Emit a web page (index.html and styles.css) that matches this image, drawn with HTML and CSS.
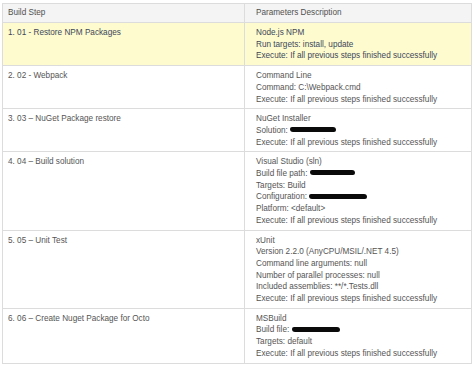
FILE: index.html
```html
<!DOCTYPE html>
<html>
<head>
<meta charset="utf-8">
<link rel="stylesheet" href="styles.css">
</head>
<body>
<table class="steps">
  <thead>
    <tr><th class="c1">Build Step</th><th class="c2">Parameters Description</th></tr>
  </thead>
  <tbody>
    <tr class="hl">
      <td class="c1">1. 01 - Restore NPM Packages</td>
      <td class="c2"><div>Node.js NPM</div><div>Run targets: install, update</div><div>Execute: If all previous steps finished successfully</div></td>
    </tr>
    <tr>
      <td class="c1">2. 02 - Webpack</td>
      <td class="c2"><div>Command Line</div><div>Command: C:\Webpack.cmd</div><div>Execute: If all previous steps finished successfully</div></td>
    </tr>
    <tr>
      <td class="c1">3. 03 – NuGet Package restore</td>
      <td class="c2"><div>NuGet Installer</div><div>Solution: <span class="redact r1"></span></div><div>Execute: If all previous steps finished successfully</div></td>
    </tr>
    <tr>
      <td class="c1">4. 04 – Build solution</td>
      <td class="c2"><div>Visual Studio (sln)</div><div>Build file path: <span class="redact r2"></span></div><div>Targets: Build</div><div>Configuration: <span class="redact r3"></span></div><div>Platform: &lt;default&gt;</div><div>Execute: If all previous steps finished successfully</div></td>
    </tr>
    <tr>
      <td class="c1">5. 05 – Unit Test</td>
      <td class="c2"><div>xUnit</div><div>Version 2.2.0 (AnyCPU/MSIL/.NET 4.5)</div><div>Command line arguments: null</div><div>Number of parallel processes: null</div><div>Included assemblies: **/*.Tests.dll</div><div>Execute: If all previous steps finished successfully</div></td>
    </tr>
    <tr>
      <td class="c1">6. 06 – Create Nuget Package for Octo</td>
      <td class="c2"><div>MSBuild</div><div>Build file: <span class="redact r4"></span></div><div>Targets: default</div><div>Execute: If all previous steps finished successfully</div></td>
    </tr>
  </tbody>
</table>
</body>
</html>
```
FILE: styles.css
```css
html, body {
  margin: 0;
  padding: 0;
  background: #ffffff;
}
body {
  padding: 3px 2px 0 2px;
  font-family: "Liberation Sans", Arial, sans-serif;
  font-size: 8.2px;
  color: #555;
}
.steps {
  width: 470px;
  border-collapse: collapse;
  table-layout: fixed;
  border: 1px solid #dcdcdc;
}
.steps th, .steps td {
  border-top: 1px solid #dcdcdc;
  border-bottom: 1px solid #dcdcdc;
  text-align: left;
  vertical-align: top;
  font-weight: normal;
  line-height: 11.7px;
}
.steps th {
  background: #f4f4f4;
  color: #505050;
  padding: 3px 0 3px 0;
  height: 12px;
}
.steps td {
  padding: 4px 0 3px 0;
}
.steps .c1 {
  width: 236px;
  padding-left: 5px;
  border-right: 1px solid #dcdcdc;
}
.steps .c2 {
  padding-left: 11px;
}
.hl td {
  background: #fefbcf;
  color: #3d4759;
}
.redact {
  display: inline-block;
  height: 5px;
  background: #0a0a0a;
  border-radius: 2px 3px 2px 3px;
  vertical-align: middle;
  margin-top: -2px;
}
.r1 { width: 46px; }
.r2 { width: 45px; }
.r3 { width: 58px; }
.r4 { width: 48px; }
```
